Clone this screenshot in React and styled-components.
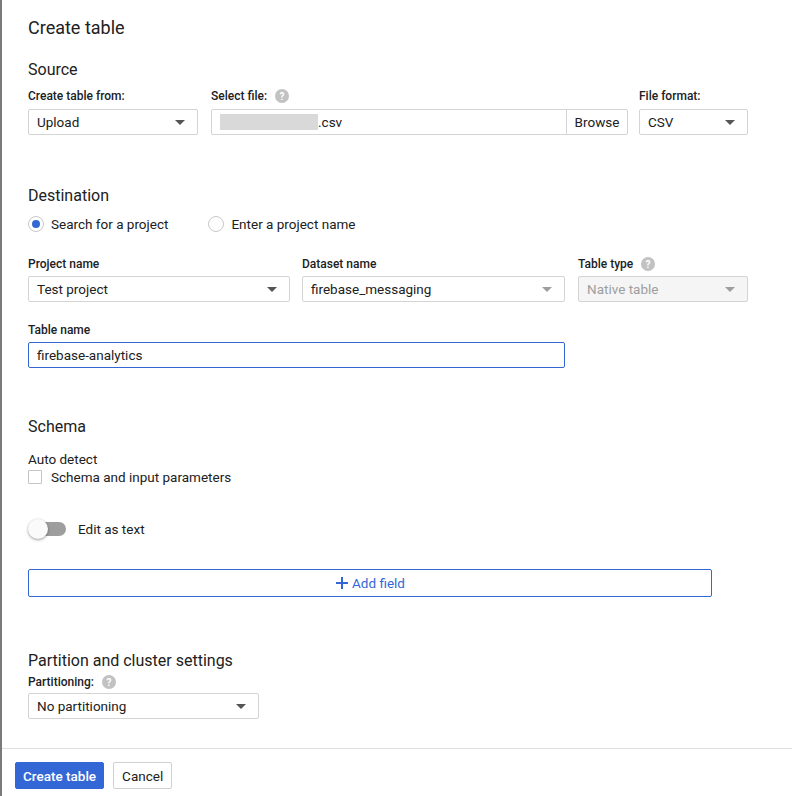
import styled, { createGlobalStyle } from "styled-components";

const GlobalStyle = createGlobalStyle`
  body {
    margin: 0;
    background: #fff;
    font-family: Roboto, 'Liberation Sans', sans-serif;
    color: #212121;
  }
`;

const Dialog = styled.div`
  width: 790px;
  height: 796px;
  border-left: 2px solid #7a7a7a;
  background: #fff;
  overflow: hidden;
`;

const Body = styled.div`
  padding: 16px 0 29px 26px;
`;

const Title = styled.h1`
  margin: 0;
  font-size: 18px;
  line-height: 24px;
  font-weight: 400;
`;

const SectionTitle = styled.h2`
  margin: ${(p) => p.$top}px 0 0;
  font-size: 16px;
  line-height: 20px;
  font-weight: 400;
`;

const Label = styled.div`
  display: flex;
  align-items: center;
  gap: 8px;
  margin-top: ${(p) => p.$top || 0}px;
  font-size: 12px;
  line-height: 16px;
  font-weight: 500;
  color: #202124;
`;

const Row = styled.div`
  display: flex;
  align-items: flex-start;
  margin-top: ${(p) => p.$top || 0}px;
`;

const Field = styled.div`
  width: ${(p) => p.$w}px;
  margin-right: ${(p) => p.$gap || 0}px;
  display: flex;
  flex-direction: column;
  gap: ${(p) => (p.$tight ? 4 : 5)}px;
`;

const SelectBox = styled.div`
  box-sizing: border-box;
  width: ${(p) => (p.$w ? `${p.$w}px` : "100%")};
  height: 26px;
  margin-top: ${(p) => p.$top || 0}px;
  border: 1px solid #d4d4d4;
  border-radius: 2px;
  background: ${(p) => (p.$disabled ? "#f5f5f5" : "#fff")};
  color: ${(p) => (p.$disabled ? "#9e9e9e" : "#212121")};
  display: flex;
  align-items: center;
  justify-content: space-between;
  padding: 0 12px 0 8px;
  font-size: 13.5px;
`;

const Caret = styled.span`
  width: 0;
  height: 0;
  border-left: 5px solid transparent;
  border-right: 5px solid transparent;
  border-top: 5px solid ${(p) => (p.$light ? "#9e9e9e" : "#555")};
`;

const FileInput = styled.div`
  box-sizing: border-box;
  height: 26px;
  border: 1px solid #d4d4d4;
  border-radius: 2px;
  display: flex;
  align-items: stretch;
  font-size: 13.5px;
`;

const FileName = styled.div`
  flex: 1;
  display: flex;
  align-items: center;
  padding-left: 8px;
`;

const Blur = styled.span`
  width: 98px;
  height: 16px;
  background: #d9d9d9;
`;

const BrowseButton = styled.div`
  width: 60px;
  border-left: 1px solid #d4d4d4;
  display: flex;
  align-items: center;
  justify-content: center;
`;

const TextInput = styled.div`
  box-sizing: border-box;
  width: ${(p) => p.$w}px;
  height: 26px;
  border: 1px solid #3367d6;
  border-radius: 2px;
  display: flex;
  align-items: center;
  padding-left: 8px;
  font-size: 13.5px;
`;

const RadioGroup = styled.div`
  display: flex;
  gap: 40px;
  margin-top: 10px;
  font-size: 13.5px;
  line-height: 16px;
`;

const RadioOption = styled.label`
  display: flex;
  align-items: center;
  gap: 7px;
`;

const RadioCircle = styled.span`
  box-sizing: border-box;
  width: 16px;
  height: 16px;
  border-radius: 50%;
  border: 1px solid #c8c8c8;
  display: flex;
  align-items: center;
  justify-content: center;
  &::after {
    content: "";
    width: 8px;
    height: 8px;
    border-radius: 50%;
    background: ${(p) => (p.$checked ? "#3367d6" : "transparent")};
  }
`;

const PlainText = styled.div`
  margin-top: ${(p) => p.$top || 0}px;
  font-size: 13.5px;
  line-height: 18px;
`;

const CheckRow = styled.label`
  display: flex;
  align-items: center;
  gap: 9px;
  margin-top: 1px;
  font-size: 13.5px;
  line-height: 16px;
`;

const CheckBox = styled.span`
  box-sizing: border-box;
  width: 14px;
  height: 14px;
  border: 1px solid #c4c4c4;
  border-radius: 1px;
`;

const ToggleRow = styled.div`
  display: flex;
  align-items: center;
  gap: 12px;
  margin-top: 34px;
  font-size: 13.5px;
`;

const Toggle = styled.span`
  position: relative;
  width: 38px;
  height: 20px;
  &::before {
    content: "";
    position: absolute;
    left: 2px;
    top: 3px;
    width: 36px;
    height: 14px;
    border-radius: 7px;
    background: #9e9e9e;
  }
  &::after {
    content: "";
    position: absolute;
    left: 0;
    top: 0;
    width: 20px;
    height: 20px;
    border-radius: 50%;
    background: #fafafa;
    box-shadow: 0 1px 3px rgba(0, 0, 0, 0.4);
  }
`;

const AddField = styled.button`
  box-sizing: border-box;
  width: 684px;
  height: 28px;
  margin-top: 30px;
  border: 1px solid #3367d6;
  border-radius: 2px;
  background: #fff;
  color: #3367d6;
  font-family: Roboto, 'Liberation Sans', sans-serif;
  font-size: 13.5px;
  display: flex;
  align-items: center;
  justify-content: center;
  gap: 3px;
  padding: 0;
`;

const Footer = styled.div`
  border-top: 1px solid #e0e0e0;
  padding: 13px 13px;
  display: flex;
  gap: 9px;
`;

const Button = styled.button`
  box-sizing: border-box;
  height: 27px;
  padding: 0 ${(p) => (p.$primary ? 7 : 8)}px;
  border-radius: 2px;
  border: 1px solid ${(p) => (p.$primary ? "#3367d6" : "#d0d0d0")};
  background: ${(p) => (p.$primary ? "#3367d6" : "#fff")};
  color: ${(p) => (p.$primary ? "#fff" : "#212121")};
  font-family: Roboto, 'Liberation Sans', sans-serif;
  font-size: 13.5px;
  font-weight: ${(p) => (p.$primary ? 500 : 400)};
`;

const HelpIcon = () => (
  <svg width="14" height="14" viewBox="0 0 14 14">
    <circle cx="7" cy="7" r="7" fill="#c2c2c2" />
    <text x="7" y="10.6" textAnchor="middle" fontSize="10" fontWeight="700" fill="#fff" fontFamily="Roboto, sans-serif">?</text>
  </svg>
);

const PlusIcon = () => (
  <svg width="14" height="14" viewBox="0 0 14 14">
    <path d="M6 1h2v5h5v2H8v5H6V8H1V6h5z" fill="#3367d6" />
  </svg>
);

export default function App() {
  return (
    <>
      <GlobalStyle />
      <Dialog>
        <Body>
          <Title>Create table</Title>

          <SectionTitle $top={20}>Source</SectionTitle>
          <Row $top={8}>
            <Field $w={170} $gap={13}>
              <Label>Create table from:</Label>
              <SelectBox>Upload<Caret /></SelectBox>
            </Field>
            <Field $w={417} $gap={11}>
              <Label>Select file: <HelpIcon /></Label>
              <FileInput>
                <FileName><Blur />.csv</FileName>
                <BrowseButton>Browse</BrowseButton>
              </FileInput>
            </Field>
            <Field $w={109}>
              <Label>File format:</Label>
              <SelectBox>CSV<Caret /></SelectBox>
            </Field>
          </Row>

          <SectionTitle $top={51}>Destination</SectionTitle>
          <RadioGroup>
            <RadioOption><RadioCircle $checked />Search for a project</RadioOption>
            <RadioOption><RadioCircle />Enter a project name</RadioOption>
          </RadioGroup>
          <Row $top={24}>
            <Field $w={262} $gap={12} $tight>
              <Label>Project name</Label>
              <SelectBox>Test project<Caret /></SelectBox>
            </Field>
            <Field $w={263} $gap={13} $tight>
              <Label>Dataset name</Label>
              <SelectBox>firebase_messaging<Caret $light /></SelectBox>
            </Field>
            <Field $w={170} $tight>
              <Label>Table type <HelpIcon /></Label>
              <SelectBox $disabled>Native table<Caret $light /></SelectBox>
            </Field>
          </Row>
          <Label $top={20}>Table name</Label>
          <Row $top={4}>
            <TextInput $w={537}>firebase-analytics</TextInput>
          </Row>

          <SectionTitle $top={49}>Schema</SectionTitle>
          <PlainText $top={13}>Auto detect</PlainText>
          <CheckRow><CheckBox />Schema and input parameters</CheckRow>
          <ToggleRow><Toggle />Edit as text</ToggleRow>
          <AddField><PlusIcon />Add field</AddField>

          <SectionTitle $top={54}>Partition and cluster settings</SectionTitle>
          <Label $top={3}>Partitioning: <HelpIcon /></Label>
          <SelectBox $w={231} $top={3}>No partitioning<Caret /></SelectBox>
        </Body>
        <Footer>
          <Button $primary>Create table</Button>
          <Button>Cancel</Button>
        </Footer>
      </Dialog>
    </>
  );
}
